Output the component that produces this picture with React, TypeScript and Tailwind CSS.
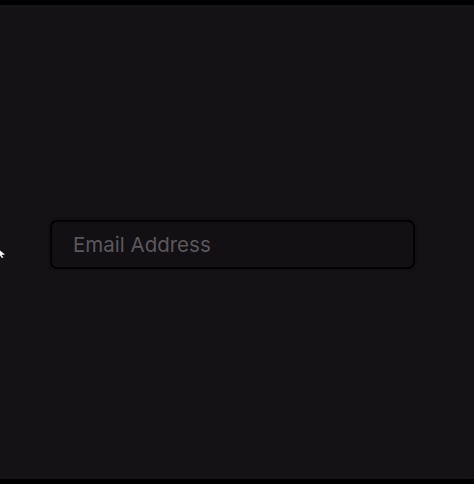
import React from 'react';

const Cursor: React.FC = () => (
  <svg width="7" height="10" viewBox="0 0 7 10" className="absolute left-0 top-[248px]">
    <path d="M-3 0 L5 6.5 L1.5 7 L3.5 9.5 L2 10 L0 7.5 L-3 9 Z" fill="#f2f2f2" />
  </svg>
);

const App: React.FC = () => {
  return (
    <div className="relative flex h-[484px] w-[474px] flex-col bg-black" style={{ fontFamily: 'Inter, "Noto Sans", sans-serif' }}>
      <div className="h-[5px] bg-black" />
      <main className="flex flex-1 items-start bg-[#141215] pl-[50px] pt-[215px]">
        <input
          type="email"
          placeholder="Email Address"
          className="h-[49px] w-[365px] rounded-[7px] border-2 border-[#040304] bg-[#121013] px-[21px] text-[20.5px] text-gray-200 placeholder:text-[#5b585d] outline-none shadow-[0_0_3px_rgba(0,0,0,0.6)]"
        />
      </main>
      <div className="h-[5px] bg-black" />
      <Cursor />
    </div>
  );
};

export default App;
